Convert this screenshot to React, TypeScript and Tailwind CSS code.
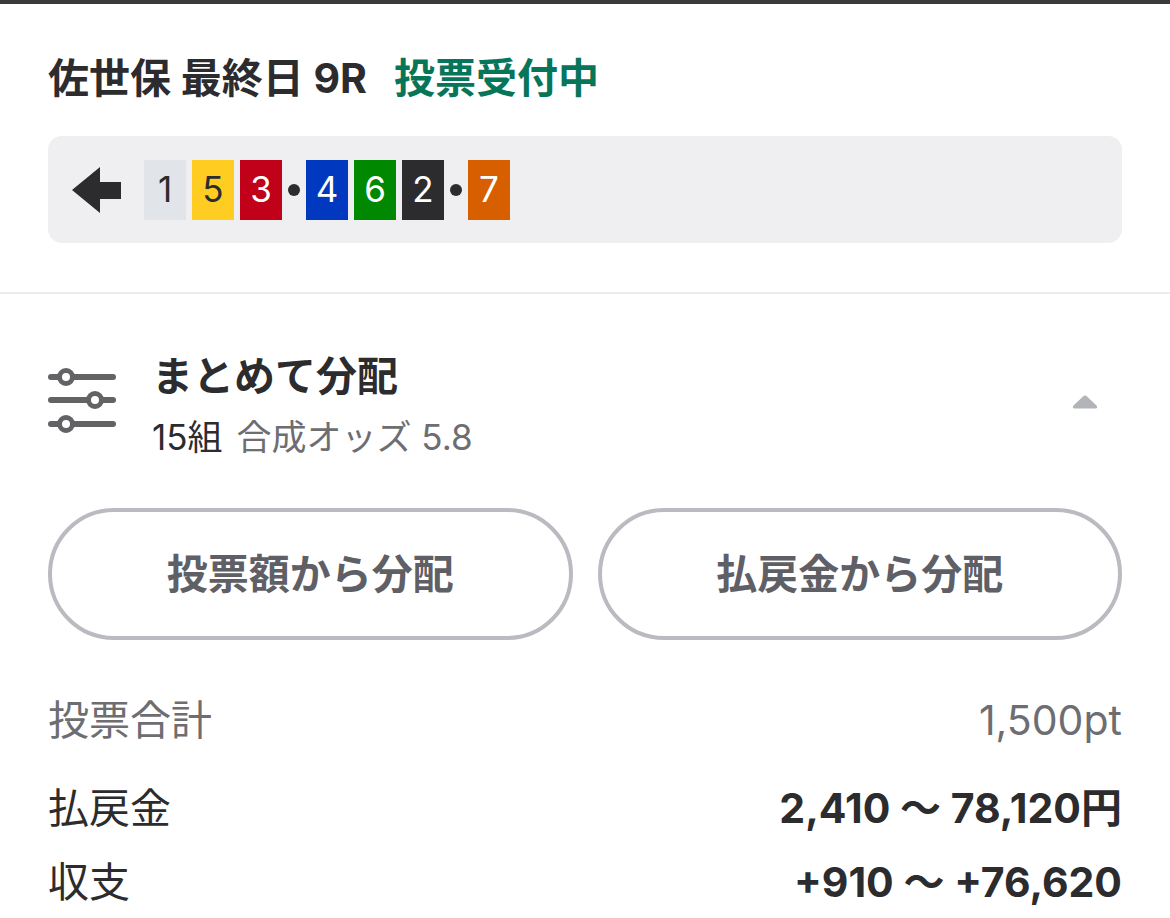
import React from "react";

const boxes: { n: string; bg: string; fg: string; dotBefore?: boolean }[] = [
  { n: "1", bg: "bg-[#e1e4e8]", fg: "text-[#2c2c2e]" },
  { n: "5", bg: "bg-[#ffcd22]", fg: "text-[#2c2c2e]" },
  { n: "3", bg: "bg-[#c1001a]", fg: "text-white" },
  { n: "4", bg: "bg-[#0039c0]", fg: "text-white", dotBefore: true },
  { n: "6", bg: "bg-[#008800]", fg: "text-white" },
  { n: "2", bg: "bg-[#2c2c2e]", fg: "text-white" },
  { n: "7", bg: "bg-[#d75f00]", fg: "text-white", dotBefore: true },
];

function Arrow() {
  return (
    <svg width="49" height="48" viewBox="0 0 49 48" className="shrink-0">
      <path d="M0 24 L28 1 L28 16 L49 16 L49 33 L28 33 L28 47 Z" fill="#2c2c2e" />
    </svg>
  );
}

function SlidersIcon() {
  return (
    <svg width="68" height="66" viewBox="0 0 68 66" className="shrink-0">
      <g stroke="#636366" strokeWidth="6" strokeLinecap="round">
        <line x1="3" y1="9" x2="65" y2="9" />
        <line x1="3" y1="32" x2="65" y2="32" />
        <line x1="3" y1="56" x2="65" y2="56" />
      </g>
      <g fill="#ffffff" stroke="#636366" strokeWidth="5">
        <circle cx="18" cy="9" r="6.5" />
        <circle cx="47" cy="32" r="6.5" />
        <circle cx="18" cy="56" r="6.5" />
      </g>
    </svg>
  );
}

function Caret() {
  return (
    <svg width="26" height="14" viewBox="0 0 26 14" className="shrink-0">
      <path
        d="M11 1.5 Q13 -0.5 15 1.5 L24.5 10.5 Q26.5 13.5 23 13.5 H3 Q-0.5 13.5 1.5 10.5 Z"
        fill="#b2b4ba"
      />
    </svg>
  );
}

export default function App() {
  return (
    <div className="w-[1170px] min-h-[918px] bg-white text-[#2c2c2e] font-['Inter','Noto_Sans_CJK_JP',sans-serif] overflow-hidden">
      <div className="h-[4px] bg-[#3a3a3c]" />
      <div className="px-[48px]">
        <div className="mt-[50px] h-[48px] flex items-center gap-[27px] text-[41px] font-bold leading-none whitespace-nowrap">
          <span>佐世保 最終日 9R</span>
          <span className="text-[#07755a]">投票受付中</span>
        </div>
        <div className="mt-[34px] h-[107px] rounded-[14px] bg-[#efeff2] flex items-center pl-[24px]">
          <Arrow />
          <div className="ml-[23px] flex items-center gap-[6px]">
            {boxes.map((b) => (
              <React.Fragment key={b.n}>
                {b.dotBefore && <div className="w-[12px] h-[12px] rounded-full bg-[#2c2c2e]" />}
                <div
                  className={`w-[42px] h-[60px] flex items-center justify-center text-[35px] leading-none ${b.bg} ${b.fg}`}
                >
                  {b.n}
                </div>
              </React.Fragment>
            ))}
          </div>
        </div>
      </div>
      <div className="mt-[49px] h-[2px] bg-[#ededf0]" />
      <div className="px-[48px]">
        <div className="mt-[58px] flex items-center">
          <div className="self-start mt-[16px]">
            <SlidersIcon />
          </div>
          <div className="ml-[36px] flex flex-col">
            <div className="h-[48px] flex items-center text-[41px] font-bold leading-none">まとめて分配</div>
            <div className="mt-[17px] h-[40px] flex items-center text-[35px] leading-none whitespace-nowrap">
              <span>15組</span>
              <span className="ml-[14px] text-[#6d6d72]">合成オッズ 5.8</span>
            </div>
          </div>
          <div className="ml-auto mr-[24px] mb-[5px]">
            <Caret />
          </div>
        </div>
        <div className="mt-[51px] grid grid-cols-2 gap-[25px]">
          <div className="h-[132px] rounded-full border-[4px] border-[#b9bbc1] flex items-center justify-center text-[41px] font-bold text-[#5f6066] leading-none">
            投票額から分配
          </div>
          <div className="h-[132px] rounded-full border-[4px] border-[#b9bbc1] flex items-center justify-center text-[41px] font-bold text-[#5f6066] leading-none">
            払戻金から分配
          </div>
        </div>
        <div className="mt-[55px] h-[50px] flex items-center justify-between text-[41px] leading-none text-[#6d6d72]">
          <span>投票合計</span>
          <span>1,500pt</span>
        </div>
        <div className="mt-[38px] h-[50px] flex items-center justify-between text-[41px] leading-none">
          <span>払戻金</span>
          <span className="font-bold">2,410 〜 78,120円</span>
        </div>
        <div className="mt-[24px] h-[50px] flex items-center justify-between text-[41px] leading-none">
          <span>収支</span>
          <span className="font-bold">+910 〜 +76,620</span>
        </div>
      </div>
    </div>
  );
}
